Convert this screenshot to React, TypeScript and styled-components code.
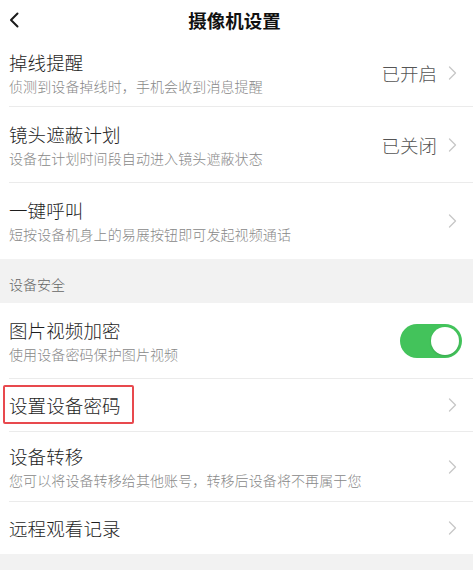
import React from "react";
import styled, { createGlobalStyle } from "styled-components";

const Global = createGlobalStyle`
  html, body { margin: 0; padding: 0; }
  body {
    background: #f2f2f2;
    font-family: "Noto Sans CJK SC", "Noto Sans", sans-serif;
    -webkit-font-smoothing: antialiased;
  }
`;

const Page = styled.div`
  width: 473px;
  min-height: 570px;
  background: #f2f2f2;
  overflow: hidden;
`;

const Header = styled.header`
  height: 40px;
  background: #fff;
  display: flex;
  align-items: center;
  justify-content: center;
  position: relative;
`;

const BackButton = styled.div`
  position: absolute;
  left: 8px;
  top: 12px;
  width: 12px;
  height: 16px;
  display: flex;
`;

const HeaderTitle = styled.h1`
  margin: 0 4px 0 0;
  font-size: 18.5px;
  font-weight: 700;
  color: #111;
  line-height: 24px;
`;

const Group = styled.section`
  background: #fff;
`;

const SectionLabel = styled.div`
  height: 44px;
  box-sizing: border-box;
  padding: 15px 0 0 9px;
  font-size: 14px;
  line-height: 20px;
  color: #666;
  font-weight: 300;
`;

const Row = styled.div`
  padding-left: 9px;
  background: #fff;
`;

const RowInner = styled.div<{ $h: number; $last?: boolean }>`
  height: ${(p) => p.$h}px;
  box-sizing: border-box;
  display: flex;
  align-items: center;
  padding-right: 16px;
  border-bottom: ${(p) => (p.$last ? "none" : "1px solid #ebebeb")};
`;

const TextCol = styled.div`
  flex: 1;
  display: flex;
  flex-direction: column;
  gap: 2px;
  min-width: 0;
`;

const Title = styled.div`
  font-size: 18.5px;
  line-height: 24px;
  color: #1e1e1e;
  font-weight: 300;
  letter-spacing: 0.1px;
  white-space: nowrap;
`;

const Highlight = styled.span`
  position: relative;
  display: inline-block;
  &::after {
    content: "";
    position: absolute;
    left: -6px;
    top: -8px;
    right: -13px;
    bottom: -7px;
    border: 2.5px solid #e8494e;
    border-radius: 2px;
  }
`;

const Sub = styled.div`
  font-size: 14px;
  line-height: 20px;
  color: #888;
  font-weight: 300;
  letter-spacing: 0.1px;
  white-space: nowrap;
`;

const Value = styled.span`
  font-size: 18.5px;
  line-height: 24px;
  color: #555;
  font-weight: 300;
  margin-right: 11px;
`;

const Chevron = styled.svg`
  width: 9px;
  height: 14px;
  flex: none;
`;

const Toggle = styled.div<{ $on: boolean }>`
  width: 62px;
  height: 34px;
  border-radius: 17px;
  background: ${(p) => (p.$on ? "#43c35b" : "#e5e5e5")};
  margin-right: -5px;
  position: relative;
  flex: none;
`;

const Knob = styled.div<{ $on: boolean }>`
  position: absolute;
  top: 3px;
  left: ${(p) => (p.$on ? "31px" : "3px")};
  width: 28px;
  height: 28px;
  border-radius: 50%;
  background: #fff;
  box-shadow: 0 1px 2px rgba(0, 0, 0, 0.15);
`;

const Arrow = () => (
  <Chevron viewBox="0 0 9 14">
    <path d="M1.5 1 L7.5 7 L1.5 13" fill="none" stroke="#c7c7c7" strokeWidth="1.3" strokeLinecap="round" strokeLinejoin="round" />
  </Chevron>
);

type Item = {
  title: string;
  sub?: string;
  value?: string;
  h: number;
  toggle?: boolean;
  highlight?: boolean;
};

const group1: Item[] = [
  { title: "掉线提醒", sub: "侦测到设备掉线时，手机会收到消息提醒", value: "已开启", h: 67 },
  { title: "镜头遮蔽计划", sub: "设备在计划时间段自动进入镜头遮蔽状态", value: "已关闭", h: 76 },
  { title: "一键呼叫", sub: "短按设备机身上的易展按钮即可发起视频通话", h: 76 },
];

const group2: Item[] = [
  { title: "图片视频加密", sub: "使用设备密码保护图片视频", h: 76, toggle: true },
  { title: "设置设备密码", h: 53, highlight: true },
  { title: "设备转移", sub: "您可以将设备转移给其他账号，转移后设备将不再属于您", h: 70 },
  { title: "远程观看记录", h: 52 },
];

const SettingRow = ({ item, last }: { item: Item; last: boolean }) => (
  <Row>
    <RowInner $h={item.h} $last={last}>
      <TextCol>
        <Title>{item.highlight ? <Highlight>{item.title}</Highlight> : item.title}</Title>
        {item.sub && <Sub>{item.sub}</Sub>}
      </TextCol>
      {item.value && <Value>{item.value}</Value>}
      {item.toggle ? (
        <Toggle $on>
          <Knob $on />
        </Toggle>
      ) : (
        <Arrow />
      )}
    </RowInner>
  </Row>
);

export default function App() {
  return (
    <Page>
      <Global />
      <Header>
        <BackButton>
          <svg width="12" height="16" viewBox="0 0 12 16">
            <path d="M9.5 1.5 L3 8 L9.5 14.5" fill="none" stroke="#1a1a1a" strokeWidth="2" strokeLinecap="round" strokeLinejoin="round" />
          </svg>
        </BackButton>
        <HeaderTitle>摄像机设置</HeaderTitle>
      </Header>
      <Group>
        {group1.map((it, i) => (
          <SettingRow key={it.title} item={it} last={i === group1.length - 1} />
        ))}
      </Group>
      <SectionLabel>设备安全</SectionLabel>
      <Group>
        {group2.map((it, i) => (
          <SettingRow key={it.title} item={it} last={i === group2.length - 1} />
        ))}
      </Group>
    </Page>
  );
}
